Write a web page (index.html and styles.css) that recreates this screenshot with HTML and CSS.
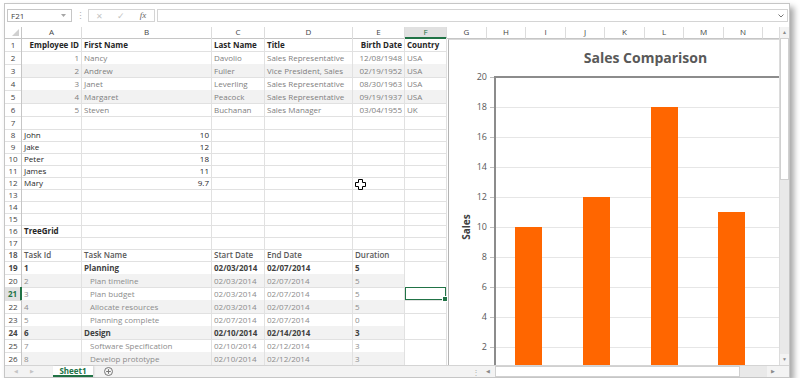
FILE: index.html
```html
<!DOCTYPE html>
<html lang="en">
<head>
    <meta charset="UTF-8">
    <title>Sheet1 - TreeGrid export</title>
    <link rel="stylesheet" href="styles.css">
</head>
<body>

<div class="window">

    <!-- Formula bar -->
    <div class="formula-bar">
        <div class="name-box">
            <span>F21</span>
            <svg class="caret" width="5" height="3" viewBox="0 0 5 3"><path d="M0 0h5L2.5 3z" fill="#a6a6a6"/></svg>
        </div>
        <div class="dots">&#8942;</div>
        <div class="fx-buttons">
            <span class="fx-cancel">&#10005;</span>
            <span class="fx-enter">&#10003;</span>
            <span class="fx-func">fx</span>
        </div>
        <div class="formula-input">
            <svg class="chevron" width="6" height="4" viewBox="0 0 6 4"><path d="M0.5 0.5L3 3L5.5 0.5" fill="none" stroke="#777" stroke-width="1"/></svg>
        </div>
    </div>

    <!-- Sheet area -->
    <div class="workspace">
        <div class="sheet">
            <div class="col-head">
                <div class="corner">
                    <svg width="7" height="7" viewBox="0 0 7 7"><path d="M7 0V7H0z" fill="#d0d0d0"/></svg>
                </div>
                <div>A</div><div>B</div><div>C</div><div>D</div><div>E</div>
                <div class="sel">F</div>
                <div>G</div><div>H</div><div>I</div><div>J</div><div>K</div>
                <div>L</div><div>M</div><div>N</div><div></div>
            </div>

            <div class="row">
                <div class="rh">1</div>
                <div class="b r">Employee ID</div><div class="b">First Name</div><div class="b">Last Name</div>
                <div class="b">Title</div><div class="b r">Birth Date</div><div class="b">Country</div>
            </div>
            <div class="row dim">
                <div class="rh">2</div>
                <div class="r">1</div><div>Nancy</div><div>Davolio</div>
                <div>Sales Representative</div><div class="r">12/08/1948</div><div>USA</div>
            </div>
            <div class="row dim alt">
                <div class="rh">3</div>
                <div class="r">2</div><div>Andrew</div><div>Fuller</div>
                <div>Vice President, Sales</div><div class="r">02/19/1952</div><div>USA</div>
            </div>
            <div class="row dim">
                <div class="rh">4</div>
                <div class="r">3</div><div>Janet</div><div>Leverling</div>
                <div>Sales Representative</div><div class="r">08/30/1963</div><div>USA</div>
            </div>
            <div class="row dim alt">
                <div class="rh">5</div>
                <div class="r">4</div><div>Margaret</div><div>Peacock</div>
                <div>Sales Representative</div><div class="r">09/19/1937</div><div>USA</div>
            </div>
            <div class="row dim">
                <div class="rh">6</div>
                <div class="r">5</div><div>Steven</div><div>Buchanan</div>
                <div>Sales Manager</div><div class="r">03/04/1955</div><div>UK</div>
            </div>
            <div class="row">
                <div class="rh">7</div>
                <div></div><div></div><div></div><div></div><div></div><div></div>
            </div>

            <!-- chart source data -->
            <div class="row h12">
                <div class="rh">8</div>
                <div>John</div><div class="r">10</div><div></div><div></div><div></div><div></div>
            </div>
            <div class="row h12">
                <div class="rh">9</div>
                <div>Jake</div><div class="r">12</div><div></div><div></div><div></div><div></div>
            </div>
            <div class="row h12">
                <div class="rh">10</div>
                <div>Peter</div><div class="r">18</div><div></div><div></div><div></div><div></div>
            </div>
            <div class="row h12">
                <div class="rh">11</div>
                <div>James</div><div class="r">11</div><div></div><div></div><div></div><div></div>
            </div>
            <div class="row h12">
                <div class="rh">12</div>
                <div>Mary</div><div class="r">9.7</div><div></div><div></div><div></div><div></div>
            </div>
            <div class="row h12">
                <div class="rh">13</div>
                <div></div><div></div><div></div><div></div><div></div><div></div>
            </div>
            <div class="row h12">
                <div class="rh">14</div>
                <div></div><div></div><div></div><div></div><div></div><div></div>
            </div>
            <div class="row h12">
                <div class="rh">15</div>
                <div></div><div></div><div></div><div></div><div></div><div></div>
            </div>
            <div class="row h12">
                <div class="rh">16</div>
                <div class="b">TreeGrid</div><div></div><div></div><div></div><div></div><div></div>
            </div>
            <div class="row h12">
                <div class="rh">17</div>
                <div></div><div></div><div></div><div></div><div></div><div></div>
            </div>

            <!-- TreeGrid export -->
            <div class="row h12 tree-head">
                <div class="rh">18</div>
                <div>Task Id</div><div>Task Name</div><div>Start Date</div><div>End Date</div><div>Duration</div><div></div>
            </div>
            <div class="row parent">
                <div class="rh">19</div>
                <div>1</div><div>Planning</div><div>02/03/2014</div><div>02/07/2014</div><div>5</div><div></div>
            </div>
            <div class="row child alt">
                <div class="rh">20</div>
                <div>2</div><div class="ind">Plan timeline</div><div>02/03/2014</div><div>02/07/2014</div><div>5</div><div class="plain"></div>
            </div>
            <div class="row child">
                <div class="rh sel">21</div>
                <div>3</div><div class="ind">Plan budget</div><div>02/03/2014</div><div>02/07/2014</div><div>5</div><div class="active"></div>
            </div>
            <div class="row child alt">
                <div class="rh">22</div>
                <div>4</div><div class="ind">Allocate resources</div><div>02/03/2014</div><div>02/07/2014</div><div>5</div><div class="plain"></div>
            </div>
            <div class="row child">
                <div class="rh">23</div>
                <div>5</div><div class="ind">Planning complete</div><div>02/07/2014</div><div>02/07/2014</div><div>0</div><div></div>
            </div>
            <div class="row parent alt">
                <div class="rh">24</div>
                <div>6</div><div>Design</div><div>02/10/2014</div><div>02/14/2014</div><div>3</div><div class="plain"></div>
            </div>
            <div class="row child">
                <div class="rh">25</div>
                <div>7</div><div class="ind">Software Specification</div><div>02/10/2014</div><div>02/12/2014</div><div>3</div><div></div>
            </div>
            <div class="row child alt">
                <div class="rh">26</div>
                <div>8</div><div class="ind">Develop prototype</div><div>02/10/2014</div><div>02/12/2014</div><div>3</div><div class="plain"></div>
            </div>

            <!-- Embedded chart -->
            <div class="chart">
                <div class="chart-title">Sales Comparison</div>
                <svg class="plot" width="394" height="310" viewBox="0 0 394 310">
                    <g stroke="#e6e6e6" stroke-width="1">
                        <line x1="47" y1="32.5" x2="394" y2="32.5"/>
                        <line x1="47" y1="62.5" x2="394" y2="62.5"/>
                        <line x1="47" y1="92.5" x2="394" y2="92.5"/>
                        <line x1="47" y1="122.5" x2="394" y2="122.5"/>
                        <line x1="47" y1="152.5" x2="394" y2="152.5"/>
                        <line x1="47" y1="182.5" x2="394" y2="182.5"/>
                        <line x1="47" y1="212.5" x2="394" y2="212.5"/>
                        <line x1="47" y1="242.5" x2="394" y2="242.5"/>
                        <line x1="47" y1="272.5" x2="394" y2="272.5"/>
                    </g>
                    <g stroke="#bfbfbf" stroke-width="1">
                        <line x1="42" y1="2.5" x2="46" y2="2.5"/>
                        <line x1="42" y1="32.5" x2="46" y2="32.5"/>
                        <line x1="42" y1="62.5" x2="46" y2="62.5"/>
                        <line x1="42" y1="92.5" x2="46" y2="92.5"/>
                        <line x1="42" y1="122.5" x2="46" y2="122.5"/>
                        <line x1="42" y1="152.5" x2="46" y2="152.5"/>
                        <line x1="42" y1="182.5" x2="46" y2="182.5"/>
                        <line x1="42" y1="212.5" x2="46" y2="212.5"/>
                        <line x1="42" y1="242.5" x2="46" y2="242.5"/>
                        <line x1="42" y1="272.5" x2="46" y2="272.5"/>
                    </g>
                    <line x1="46" y1="2" x2="394" y2="2" stroke="#8c8c8c" stroke-width="2"/>
                    <line x1="47" y1="1" x2="47" y2="303" stroke="#8c8c8c" stroke-width="2"/>
                    <g class="axis-label">
                        <text x="39" y="3">20</text>
                        <text x="39" y="33">18</text>
                        <text x="39" y="63">16</text>
                        <text x="39" y="93">14</text>
                        <text x="39" y="123">12</text>
                        <text x="39" y="153">10</text>
                        <text x="39" y="183">8</text>
                        <text x="39" y="213">6</text>
                        <text x="39" y="243">4</text>
                        <text x="39" y="273">2</text>
                    </g>
                    <text class="axis-title" transform="translate(19,152) rotate(-90)">Sales</text>
                    <g fill="#ff6600">
                        <rect x="67" y="152" width="27" height="150"/>
                        <rect x="135" y="122" width="27" height="180"/>
                        <rect x="203" y="32" width="27" height="270"/>
                        <rect x="270" y="137" width="27" height="165"/>
                        <rect x="338" y="156.5" width="27" height="145.5"/>
                    </g>
                </svg>
            </div>

            <svg class="cursor" width="11" height="11" viewBox="0 0 11 11"><path d="M3.5 0.5h4v3h3v4h-3v3h-4v-3h-3v-4h3z" fill="#fff" stroke="#000"/></svg>
        </div>

        <div class="vscroll">
            <div class="arrow">&#9650;</div>
            <div class="thumb"></div>
            <div class="track"></div>
            <div class="arrow">&#9660;</div>
        </div>
    </div>

    <!-- Sheet tabs and horizontal scroll -->
    <div class="sheet-bar">
        <div class="tab-nav"><span>&#9664;</span><span>&#9654;</span></div>
        <div class="tab">Sheet1</div>
        <div class="add-sheet">
            <svg width="9" height="9" viewBox="0 0 9 9"><circle cx="4.5" cy="4.5" r="4" fill="none" stroke="#777"/><path d="M4.5 2.2v4.6M2.2 4.5h4.6" stroke="#777"/></svg>
        </div>
        <div class="spacer"></div>
        <div class="hscroll">
            <span class="split">&#8942;</span>
            <span class="arrow">&#9664;</span>
            <span class="thumb"></span>
            <span class="track"></span>
            <span class="arrow">&#9654;</span>
        </div>
        <div class="corner-box"></div>
    </div>

</div>

</body>
</html>
```

FILE: styles.css
```css
/* General */
* {
    box-sizing: border-box;
}

body {
    margin: 0;
    background: #fff;
    font-family: "Open Sans", "Noto Sans", sans-serif;
    font-size: 8px;
    color: #262626;
}

.window {
    margin: 3px 0 0 4px;
    width: 786px;
    height: 375px;
    border: 1px solid #c6c6c6;
    background: #fff;
    box-shadow: 4px 4px 6px rgba(0, 0, 0, 0.35);
    display: flex;
    flex-direction: column;
    overflow: hidden;
}

/* Formula bar */
.formula-bar {
    height: 23px;
    display: flex;
    align-items: flex-start;
    padding: 5px 1px 0 2px;
}

.name-box {
    width: 65px;
    height: 13px;
    border: 1px solid #c6c6c6;
    display: flex;
    align-items: center;
    justify-content: space-between;
    padding: 0 5px 0 3px;
    color: #444;
}

.dots {
    width: 16px;
    height: 13px;
    line-height: 13px;
    text-align: center;
    color: #b0b0b0;
    font-size: 9px;
}

.fx-buttons {
    width: 67px;
    height: 13px;
    border: 1px solid #d4d4d4;
    display: flex;
    align-items: center;
}

.fx-buttons span {
    text-align: center;
    line-height: 11px;
}

.fx-cancel {
    width: 20px;
    color: #c4c4c4;
    font-size: 8px;
}

.fx-enter {
    width: 24px;
    color: #c4c4c4;
    font-size: 9px;
}

.fx-func {
    width: 20px;
    color: #666;
    font-family: "Liberation Serif", serif;
    font-style: italic;
    font-size: 9px;
}

.formula-input {
    flex: 1;
    height: 13px;
    margin-left: 2px;
    border: 1px solid #d4d4d4;
    display: flex;
    align-items: center;
    justify-content: flex-end;
    padding-right: 3px;
}

/* Sheet */
.workspace {
    height: 338px;
    display: flex;
}

.sheet {
    width: 774px;
    position: relative;
    overflow: hidden;
}

.col-head {
    display: grid;
    grid-template-columns: 17px 60px 130px 53px 88px 52px 42px 40px 39px 40px 39px 40px 39px 40px 39px 40px;
    height: 11px;
}

.col-head div {
    border-right: 1px solid #dcdcdc;
    border-bottom: 1px solid #c6c6c6;
    text-align: center;
    line-height: 10px;
    color: #444;
}

.col-head .corner {
    display: flex;
    align-items: flex-end;
    justify-content: flex-end;
    padding: 0 2px 2px 0;
    border-right-color: #c6c6c6;
}

.col-head .sel {
    background: #e1e1e1;
    color: #217346;
    border-bottom: 2px solid #217346;
}

.row {
    display: grid;
    grid-template-columns: 17px 60px 130px 53px 88px 52px 42px;
    height: 13px;
}

.row.h12 {
    height: 12px;
}

.row div {
    border-right: 1px solid #e1e1e1;
    border-bottom: 1px solid #e1e1e1;
    padding: 0 2px;
    line-height: 13px;
    white-space: nowrap;
}

.row.h12 div {
    line-height: 12px;
}

.row .rh {
    padding: 0;
    text-align: center;
    color: #444;
    border-right-color: #c6c6c6;
}

.row .rh.sel {
    background: #e1e1e1;
    color: #217346;
    font-weight: 700;
    border-right: 2px solid #217346;
}

.r {
    text-align: right;
}

.b {
    font-weight: 700;
}

.dim {
    color: #808080;
}

.alt div:not(.rh) {
    background: #f2f2f2;
}

.alt div.plain {
    background: #fff;
}

.tree-head {
    color: #595959;
    font-weight: 600;
}

.parent {
    color: #404040;
    font-weight: 700;
}

.child {
    color: #8c8c8c;
}

.row .ind {
    padding-left: 8px;
}

.row .active {
    position: relative;
    box-shadow: inset 0 0 0 1px #217346;
}

.row .active::after {
    content: "";
    position: absolute;
    right: -2px;
    bottom: -2px;
    width: 4px;
    height: 4px;
    background: #217346;
    border: 1px solid #fff;
}

/* Chart object */
.chart {
    position: absolute;
    top: 12px;
    left: 443px;
    width: 394px;
    height: 340px;
    background: #fff;
    border-left: 1px solid #b4b4b4;
    border-top: 1px solid #d9d9d9;
}

.chart-title {
    height: 35px;
    line-height: 36px;
    text-align: center;
    font-size: 14px;
    font-weight: 700;
    color: #595959;
}

.plot {
    display: block;
    margin-left: -1px;
    overflow: visible;
}

.axis-label text {
    font-family: "Open Sans", sans-serif;
    font-size: 9px;
    fill: #595959;
    text-anchor: end;
    dominant-baseline: middle;
}

.axis-title {
    font-family: "Open Sans", sans-serif;
    font-size: 10px;
    font-weight: 700;
    fill: #404040;
    text-anchor: middle;
    dominant-baseline: middle;
}

.cursor {
    position: absolute;
    left: 350px;
    top: 152px;
}

/* Vertical scrollbar */
.vscroll {
    width: 10px;
    display: flex;
    flex-direction: column;
    background: #e9e9e9;
    border-left: 1px solid #dcdcdc;
}

.vscroll .arrow {
    height: 11px;
    font-size: 5px;
    line-height: 11px;
    text-align: center;
    color: #8a8a8a;
    background: #f3f3f3;
}

.vscroll .thumb {
    height: 142px;
    background: #fff;
    border: 1px solid #d0d0d0;
}

.vscroll .track {
    flex: 1;
}

/* Sheet tabs */
.sheet-bar {
    height: 12px;
    display: flex;
    background: #f3f3f3;
    border-top: 1px solid #d4d4d4;
}

.tab-nav {
    width: 48px;
    padding-left: 3px;
    display: flex;
}

.tab-nav span {
    width: 16px;
    text-align: center;
    font-size: 5px;
    line-height: 11px;
    color: #c4c4c4;
}

.tab {
    width: 40px;
    background: #fff;
    color: #217346;
    font-weight: 700;
    text-align: center;
    line-height: 10px;
    border-bottom: 2px solid #217346;
    box-shadow: 1px 0 2px rgba(0, 0, 0, 0.15);
}

.add-sheet {
    width: 30px;
    display: flex;
    align-items: center;
    justify-content: center;
}

.spacer {
    flex: 1;
}

.hscroll {
    width: 309px;
    display: flex;
    align-items: stretch;
}

.hscroll span {
    text-align: center;
    line-height: 11px;
    color: #8a8a8a;
}

.hscroll .split {
    width: 12px;
    font-size: 8px;
    color: #b0b0b0;
}

.hscroll .arrow {
    width: 12px;
    font-size: 5px;
}

.hscroll .thumb {
    width: 245px;
    margin-left: 1px;
    background: #fff;
    border: 1px solid #d0d0d0;
}

.hscroll .track {
    flex: 1;
    background: #e9e9e9;
}

.corner-box {
    width: 10px;
    background: #f3f3f3;
}
```
